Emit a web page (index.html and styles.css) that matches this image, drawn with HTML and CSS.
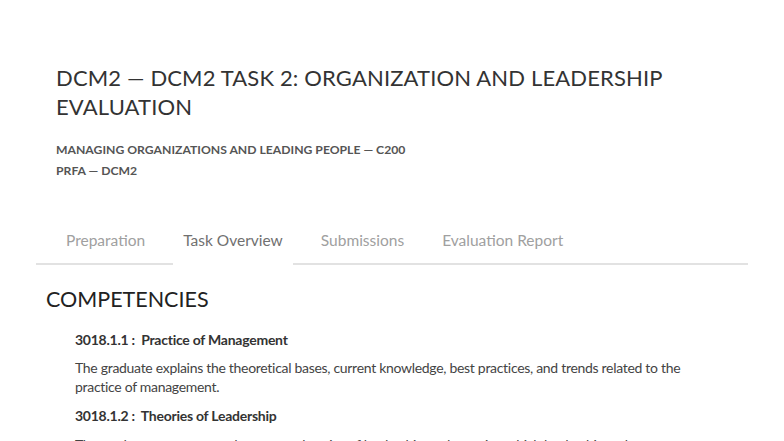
FILE: index.html
```
<!DOCTYPE html>
<html lang="en">
<head>
<meta charset="utf-8">
<title>DCM2 Task 2</title>
<link rel="stylesheet" href="styles.css">
</head>
<body>
<div class="page">
  <header class="task-header">
    <h1 class="task-title">DCM2 — DCM2 TASK 2: ORGANIZATION AND LEADERSHIP EVALUATION</h1>
    <div class="task-meta">
      <div>MANAGING ORGANIZATIONS AND LEADING PEOPLE — C200</div>
      <div>PRFA — DCM2</div>
    </div>
  </header>
  <nav class="tabs">
    <span class="tab">Preparation</span>
    <span class="tab active">Task Overview</span>
    <span class="tab">Submissions</span>
    <span class="tab">Evaluation Report</span>
  </nav>
  <section class="content">
    <h2 class="section-title">COMPETENCIES</h2>
    <div class="competency">
      <h3 class="comp-title">3018.1.1 :&nbsp; Practice of Management</h3>
      <p class="comp-text">The graduate explains the theoretical bases, current knowledge, best practices, and trends related to the practice of management.</p>
    </div>
    <div class="competency">
      <h3 class="comp-title">3018.1.2 :&nbsp; Theories of Leadership</h3>
      <p class="comp-text">The graduate compares and contrasts theories of leadership to determine which leadership styles are effective in various situations.</p>
    </div>
  </section>
</div>
</body>
</html>
```
FILE: styles.css
```
html, body {
  margin: 0;
  padding: 0;
  background: #fff;
}
body {
  font-family: Lato, "Open Sans", "Liberation Sans", sans-serif;
  color: #333;
  overflow: hidden;
}
.page {
  width: 712px;
  margin-left: 36px;
}
.task-header {
  padding: 63px 0 0 20px;
}
.task-title {
  margin: 0;
  font-size: 22px;
  font-weight: 400;
  line-height: 29px;
  letter-spacing: 0.15px;
  color: #333;
}
.task-meta {
  margin-top: 18px;
  font-size: 12.2px;
  font-weight: 700;
  line-height: 21px;
  color: #555;
}
.tabs {
  display: flex;
  gap: 18px;
  margin-top: 44px;
  padding-left: 20px;
  border-bottom: 2px solid #e2e2e2;
}
.tab {
  padding: 5px 10px 13px;
  font-size: 15.5px;
  line-height: 20px;
  color: #a0a0a0;
  margin-bottom: -2px;
  border-bottom: 2px solid transparent;
}
.tab.active {
  color: #707070;
  border-bottom-color: #fff;
}
.content {
  padding: 20px 0 0 10px;
}
.section-title {
  margin: 0;
  font-size: 21.5px;
  font-weight: 400;
  line-height: 28px;
  color: #222;
}
.competency {
  padding-left: 29px;
}
.comp-title {
  margin: 17px 0 0;
  font-size: 14px;
  font-weight: 700;
  line-height: 20px;
  letter-spacing: -0.25px;
  color: #333;
}
.comp-text {
  margin: 8px 0 0;
  width: 620px;
  font-size: 14px;
  line-height: 19px;
  letter-spacing: -0.3px;
  color: #444;
}
.competency + .competency .comp-title {
  margin-top: 10px;
}
.competency + .competency .comp-text {
  margin-top: 9px;
}
```
